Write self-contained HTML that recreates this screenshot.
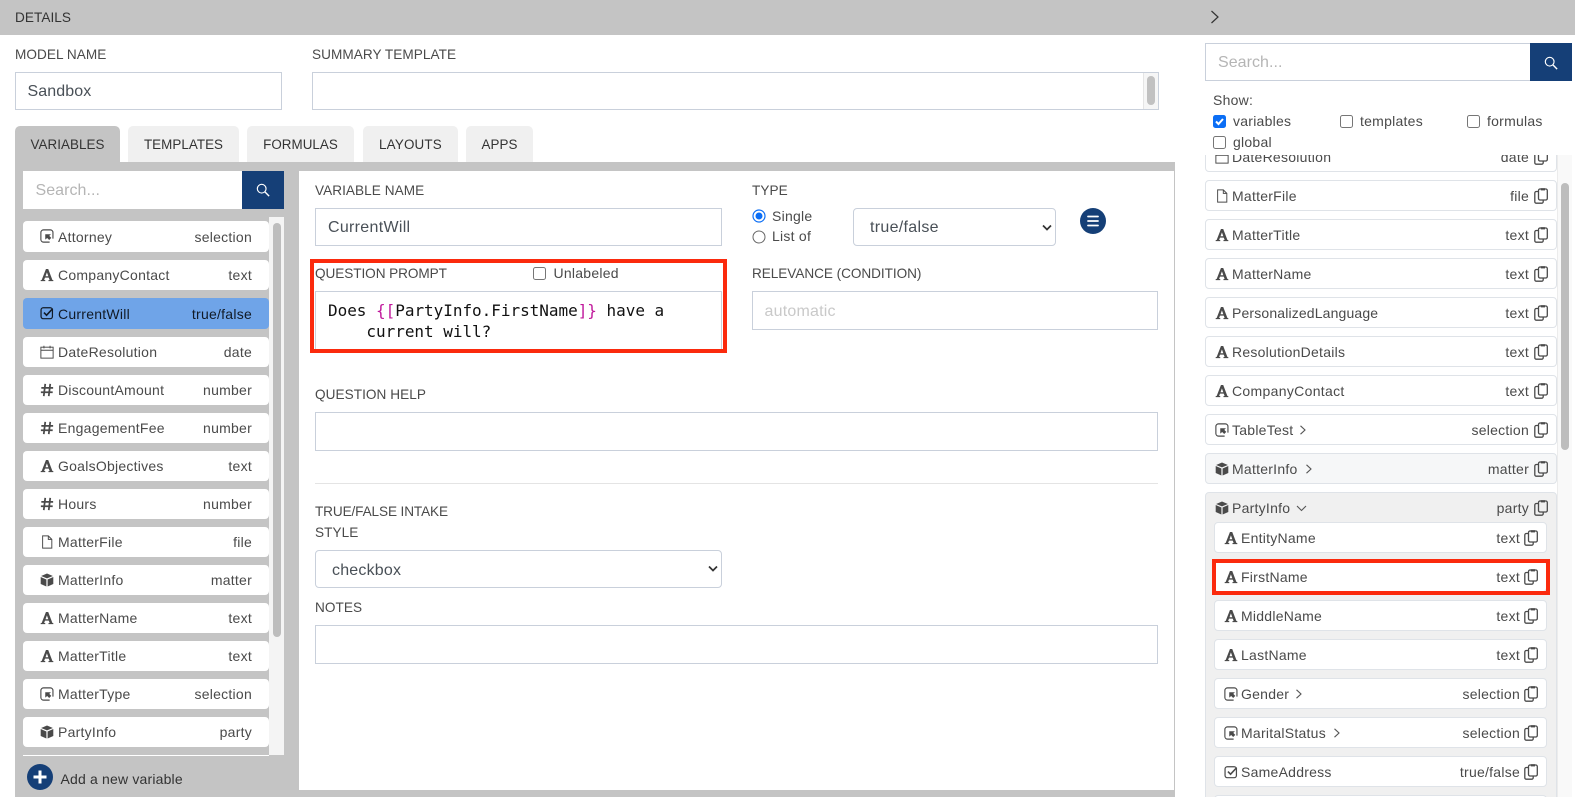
<!DOCTYPE html>
<html><head><meta charset="utf-8"><style>
html,body{margin:0;padding:0;width:1575px;height:797px;overflow:hidden;background:#fff}
body{position:relative;font-family:"Liberation Sans",sans-serif;font-size:14px;color:#4a4a4a}
div,span,svg{position:absolute;box-sizing:border-box}
.t{line-height:20px;white-space:nowrap;letter-spacing:.25px}
.l{line-height:20px;white-space:nowrap;font-size:13.6px;color:#4a4a4a;letter-spacing:.05px;margin-top:1px}
.b{background:#fff;border:1px solid #c9d0db}
.v{font-size:16px;line-height:20px;color:#495057;white-space:nowrap;letter-spacing:.1px;margin-top:1px}
.g{background:#c4c4c4}
.tab{top:126px;height:36px;border-radius:5px 5px 0 0;background:#f0f0f0;color:#333;font-size:13.4px;line-height:37px;text-align:center;letter-spacing:.05px}
.r{left:23px;width:246px;height:30px;background:#fff;border-radius:4px}
.r .i,.q .i,.c .i{width:14px;height:14px;top:8px;fill:#4a4a4a;color:#4a4a4a}
.r .i{left:17px}
.r .n{left:35px;top:5px}
.r .k{right:17px;top:5px}
.n,.k{line-height:20px;white-space:nowrap;letter-spacing:.25px}
.q{left:1205px;width:352px;height:31px;background:#fff;border:1px solid #dfe3e8;border-radius:4px}
.c{left:1214px;width:333px;height:31px;background:#fff;border:1px solid #dfe3e8;border-radius:4px}
.q .i,.c .i{left:9px}
.q .n,.c .n{left:26px;top:5px}
.q .k{right:27px;top:5px}
.c .k{right:26px;top:5px}
.q .i.p,.c .i.p{left:auto;right:8.5px;top:7px;width:14px;height:16px}
.a{top:10px;width:8px;height:10px;fill:none;stroke:#555;stroke-width:1.1}
.cb{width:13px;height:13px;border:1px solid #767676;border-radius:2.5px;background:#fff}
</style></head><body>
<svg width="0" height="0" style="left:0;top:0"><defs>
<symbol id="A" viewBox="0 0 16 16"><path fill-rule="evenodd" d="M.8 15v-1.3h1.1L6.8 1.2h2.6l4.8 12.5h1v1.3H9.7v-1.3h1.3L10 11H5.7l-1 2.7H6V15zM6.3 9.4h3.2L7.9 5z"/></symbol>
<symbol id="S" viewBox="0 0 16 16"><path d="M14.8 11V4a3 3 0 0 0-3-3H4a3 3 0 0 0-3 3v8a3 3 0 0 0 3 3h7" fill="none" stroke="currentColor" stroke-width="1.300"/><path d="M6 6h6.500l-1.900 1.900 2.300 2.300-2.400 2.400-2.300-2.300L6 12.200z"/></symbol>
<symbol id="B" viewBox="0 0 16 16"><path d="M8 .6l6.700 2.800L8 6.200 1.300 3.400zM.8 4.600l6.500 2.800V15.400L.8 12.600zM15.200 4.600L8.700 7.400V15.400l6.500-2.800z"/></symbol>
<symbol id="C" viewBox="0 0 16 16"><rect x="1.200" y="2" width="13" height="12.500" rx="2.500" fill="none" stroke="currentColor" stroke-width="1.400"/><path d="M4.500 7.500l3 3L14.500 3" fill="none" stroke="currentColor" stroke-width="1.800"/></symbol>
<symbol id="D" viewBox="0 0 16 16"><rect x="1" y="2.500" width="14" height="12.500" fill="none" stroke="currentColor" stroke-width="1.100"/><path d="M1 6h14M4.500 .8v3M11.500 .8v3" fill="none" stroke="currentColor" stroke-width="1.100"/></symbol>
<symbol id="H" viewBox="0 0 16 16"><path d="M6 1L4.300 15M11.700 1L10 15M1.500 5.500h13.500M1 10.500h13.500" fill="none" stroke="currentColor" stroke-width="2"/></symbol>
<symbol id="F" viewBox="0 0 16 16"><path d="M3 1h6.500L13.500 5v10H3zM9.500 1v4h4" fill="none" stroke="currentColor" stroke-width="1.100"/></symbol>
<symbol id="P" viewBox="0 0 14 16"><rect x="4.500" y="1" width="8.800" height="11" rx="1.500" fill="none" stroke="currentColor" stroke-width="1.300"/><path d="M4.500 3.500H2.300A1.500 1.500 0 0 0 .8 5v8.700a1.500 1.500 0 0 0 1.500 1.500h5.400a1.500 1.500 0 0 0 1.500-1.500V12" fill="none" stroke="currentColor" stroke-width="1.300"/><rect x="6.800" y=".2" width="4.200" height="2.200" fill="currentColor"/></symbol>
<symbol id="R" viewBox="0 0 8 10"><path d="M1.500 .8L6 5 1.500 9.200"/></symbol>
<symbol id="G" viewBox="0 0 16 16"><circle cx="6.500" cy="6.500" r="5" fill="none" stroke="#fff" stroke-width="1.300"/><path d="M10.200 10.200l4.800 4.800" stroke="#fff" stroke-width="1.600" fill="none"/></symbol>
</defs></svg>

<div class="g" style="left:0;top:0;width:1575px;height:35px"></div>
<div class="t" style="left:15px;top:8px;color:#333;font-size:13.6px;letter-spacing:.05px">DETAILS</div>
<svg style="left:1210px;top:10px" width="10" height="14" viewBox="0 0 10 14"><path d="M1.500 1l6.500 6-6.500 6" fill="none" stroke="#333" stroke-width="1.200"/></svg>

<div class="l" style="left:15px;top:44px">MODEL NAME</div>
<div class="b" style="left:15px;top:72px;width:267px;height:38px"></div>
<div class="v" style="left:27.500px;top:81px">Sandbox</div>
<div class="l" style="left:312px;top:44px">SUMMARY TEMPLATE</div>
<div class="b" style="left:312px;top:72px;width:847px;height:38px"></div>
<div style="left:1143px;top:73px;width:15px;height:36px;background:#f6f6f6;border-left:1px solid #e5e5e5"></div>
<div style="left:1147px;top:76px;width:8px;height:29px;background:#c1c1c1;border-radius:4px"></div>

<div class="tab g" style="left:15px;width:105px;background:#c4c4c4">VARIABLES</div>
<div class="tab" style="left:128px;width:111px">TEMPLATES</div>
<div class="tab" style="left:247px;width:107px">FORMULAS</div>
<div class="tab" style="left:363px;width:95px;letter-spacing:.2px">LAYOUTS</div>
<div class="tab" style="left:466px;width:67px">APPS</div>

<div class="g" style="left:15px;top:162px;width:1160px;height:635px"></div>
<div style="left:299px;top:171px;width:876px;height:619px;background:#fff;border-right:1px solid #c4c4c4"></div>

<div style="left:23px;top:171px;width:219px;height:38px;background:#fff"></div>
<div class="t" style="left:35.500px;top:181px;font-size:16px;color:#b5b5b5;letter-spacing:.05px">Search...</div>
<div style="left:242px;top:171px;width:42px;height:38px;background:#153f77"></div>
<svg style="left:256px;top:183px" width="14" height="14"><use href="#G"/></svg>

<div style="left:269px;top:217px;width:15px;height:538px;background:#f4f4f4"></div>
<div style="left:273px;top:223px;width:8px;height:414px;background:#bdbdbd;border-radius:4px"></div>

<div class="r" style="top:221px;height:31px"><svg class="i"><use href="#S"/></svg><span class="n" style="top:6px">Attorney</span><span class="k" style="top:6px">selection</span></div>
<div class="r" style="top:260px"><svg class="i"><use href="#A"/></svg><span class="n">CompanyContact</span><span class="k">text</span></div>
<div class="r" style="top:298px;height:31px;background:#6fa4e8;color:#111a26"><svg class="i" style="fill:#111a26;color:#111a26"><use href="#C"/></svg><span class="n" style="top:6px">CurrentWill</span><span class="k" style="top:6px">true/false</span></div>
<div class="r" style="top:337px"><svg class="i"><use href="#D"/></svg><span class="n">DateResolution</span><span class="k">date</span></div>
<div class="r" style="top:375px"><svg class="i"><use href="#H"/></svg><span class="n">DiscountAmount</span><span class="k">number</span></div>
<div class="r" style="top:413px"><svg class="i"><use href="#H"/></svg><span class="n">EngagementFee</span><span class="k">number</span></div>
<div class="r" style="top:451px"><svg class="i"><use href="#A"/></svg><span class="n">GoalsObjectives</span><span class="k">text</span></div>
<div class="r" style="top:489px"><svg class="i"><use href="#H"/></svg><span class="n">Hours</span><span class="k">number</span></div>
<div class="r" style="top:527px"><svg class="i"><use href="#F"/></svg><span class="n">MatterFile</span><span class="k">file</span></div>
<div class="r" style="top:565px"><svg class="i"><use href="#B"/></svg><span class="n">MatterInfo</span><span class="k">matter</span></div>
<div class="r" style="top:603px"><svg class="i"><use href="#A"/></svg><span class="n">MatterName</span><span class="k">text</span></div>
<div class="r" style="top:641px"><svg class="i"><use href="#A"/></svg><span class="n">MatterTitle</span><span class="k">text</span></div>
<div class="r" style="top:679px"><svg class="i"><use href="#S"/></svg><span class="n">MatterType</span><span class="k">selection</span></div>
<div class="r" style="top:717px"><svg class="i"><use href="#B"/></svg><span class="n">PartyInfo</span><span class="k">party</span></div>
<div style="left:23px;top:755px;width:246px;height:1px;background:#fff"></div>

<svg style="left:27px;top:764px" width="26" height="26" viewBox="0 0 26 26"><circle cx="13" cy="13" r="13" fill="#153f77"/><path d="M13 6.500v13M6.500 13h13" stroke="#fff" stroke-width="3"/></svg>
<div class="t" style="left:60.500px;top:769px;color:#333;letter-spacing:.18px">Add a new variable</div>

<div class="l" style="left:315px;top:180px">VARIABLE NAME</div>
<div class="b" style="left:315px;top:208px;width:407px;height:38px"></div>
<div class="v" style="left:328px;top:217px;letter-spacing:.3px">CurrentWill</div>

<div class="l" style="left:752px;top:180px">TYPE</div>
<svg style="left:752px;top:209px" width="14" height="14"><circle cx="7" cy="7" r="6" fill="#fff" stroke="#0b6ef5" stroke-width="1.200"/><circle cx="7" cy="7" r="3.500" fill="#0b6ef5"/></svg>
<div class="t" style="left:772px;top:206px">Single</div>
<svg style="left:752px;top:230px" width="14" height="14"><circle cx="7" cy="7" r="6" fill="#fff" stroke="#666" stroke-width="1"/></svg>
<div class="t" style="left:772px;top:226px">List of</div>
<div class="b" style="left:853px;top:208px;width:203px;height:38px;border-radius:4px"></div>
<div class="v" style="left:870px;top:217px;letter-spacing:.3px">true/false</div>
<svg style="left:1042px;top:224px" width="10" height="8"><path d="M1 1.500l4 4 4-4" fill="none" stroke="#333" stroke-width="1.700"/></svg>
<svg style="left:1080px;top:208px" width="26" height="26"><circle cx="13" cy="13" r="13" fill="#153f77"/><path d="M8 8.500h10M8 13h10M8 17.500h10" stroke="#fff" stroke-width="1.800" stroke-linecap="round"/></svg>

<div class="l" style="left:315px;top:263px;letter-spacing:-.07px">QUESTION PROMPT</div>
<div class="cb" style="left:533px;top:267px"></div>
<div class="t" style="left:553.500px;top:263px">Unlabeled</div>
<div class="b" style="left:315px;top:291px;width:407px;height:60px"></div>
<div style="left:328px;top:300px;font-family:'DejaVu Sans Mono',monospace;font-size:16px;line-height:21px;letter-spacing:-.03px;color:#111;white-space:pre">Does <span style="position:static;color:#c0189b">{[</span>PartyInfo.FirstName<span style="position:static;color:#c0189b">]}</span> have a
    current will?</div>
<div style="left:310px;top:259px;width:417px;height:94px;border:4px solid #fb2a0d"></div>

<div class="l" style="left:752px;top:263px;letter-spacing:-.05px">RELEVANCE (CONDITION)</div>
<div class="b" style="left:752px;top:291px;width:406px;height:39px"></div>
<div class="v" style="left:764.500px;top:301px;color:#c9c9c9;letter-spacing:.2px">automatic</div>

<div class="l" style="left:315px;top:384px">QUESTION HELP</div>
<div class="b" style="left:315px;top:412px;width:843px;height:39px"></div>
<div style="left:315px;top:483px;width:843px;height:1px;background:#e4e4e4"></div>
<div class="l" style="left:315px;top:501px;letter-spacing:-.12px">TRUE/FALSE INTAKE</div>
<div class="l" style="left:315px;top:522px">STYLE</div>
<div class="b" style="left:315px;top:550px;width:407px;height:38px;border-radius:4px"></div>
<div class="v" style="left:332px;top:560px;letter-spacing:.2px">checkbox</div>
<svg style="left:708px;top:565px" width="10" height="8"><path d="M1 1.500l4 4 4-4" fill="none" stroke="#333" stroke-width="1.700"/></svg>
<div class="l" style="left:315px;top:597px">NOTES</div>
<div class="b" style="left:315px;top:625px;width:843px;height:39px"></div>

<div style="left:1557px;top:155px;width:15px;height:642px;background:#f9f9f9;border-left:1px solid #ececec"></div>
<div style="left:1561px;top:183px;width:8px;height:267px;background:#bdbdbd;border-radius:4px"></div>

<div class="q" style="top:141px"><svg class="i"><use href="#D"/></svg><span class="n">DateResolution</span><span class="k">date</span><svg class="i p"><use href="#P"/></svg></div>
<div class="q" style="top:180px"><svg class="i"><use href="#F"/></svg><span class="n">MatterFile</span><span class="k">file</span><svg class="i p"><use href="#P"/></svg></div>
<div class="q" style="top:219px"><svg class="i"><use href="#A"/></svg><span class="n">MatterTitle</span><span class="k">text</span><svg class="i p"><use href="#P"/></svg></div>
<div class="q" style="top:258px"><svg class="i"><use href="#A"/></svg><span class="n">MatterName</span><span class="k">text</span><svg class="i p"><use href="#P"/></svg></div>
<div class="q" style="top:297px"><svg class="i"><use href="#A"/></svg><span class="n" style="letter-spacing:.15px">PersonalizedLanguage</span><span class="k">text</span><svg class="i p"><use href="#P"/></svg></div>
<div class="q" style="top:336px"><svg class="i"><use href="#A"/></svg><span class="n">ResolutionDetails</span><span class="k">text</span><svg class="i p"><use href="#P"/></svg></div>
<div class="q" style="top:375px"><svg class="i"><use href="#A"/></svg><span class="n" style="letter-spacing:.32px">CompanyContact</span><span class="k">text</span><svg class="i p"><use href="#P"/></svg></div>
<div class="q" style="top:414px"><svg class="i"><use href="#S"/></svg><span class="n">TableTest</span><svg class="a" style="left:93px"><use href="#R"/></svg><span class="k">selection</span><svg class="i p"><use href="#P"/></svg></div>
<div class="q" style="top:453px;background:#f6f7f8"><svg class="i"><use href="#B"/></svg><span class="n">MatterInfo</span><svg class="a" style="left:99px"><use href="#R"/></svg><span class="k">matter</span><svg class="i p"><use href="#P"/></svg></div>
<div class="q" style="top:492px;height:320px;background:#f0f0f0"><svg class="i"><use href="#B"/></svg><span class="n">PartyInfo</span><svg style="left:90px;top:12px" width="11" height="7"><path d="M1 1l4.500 4.500L10 1" fill="none" stroke="#555" stroke-width="1.100"/></svg><span class="k">party</span><svg class="i p"><use href="#P"/></svg></div>

<div class="c" style="top:522px"><svg class="i"><use href="#A"/></svg><span class="n">EntityName</span><span class="k">text</span><svg class="i p"><use href="#P"/></svg></div>
<div class="c" style="top:561px"><svg class="i"><use href="#A"/></svg><span class="n">FirstName</span><span class="k">text</span><svg class="i p"><use href="#P"/></svg></div>
<div class="c" style="top:600px"><svg class="i"><use href="#A"/></svg><span class="n">MiddleName</span><span class="k">text</span><svg class="i p"><use href="#P"/></svg></div>
<div class="c" style="top:639px"><svg class="i"><use href="#A"/></svg><span class="n">LastName</span><span class="k">text</span><svg class="i p"><use href="#P"/></svg></div>
<div class="c" style="top:678px"><svg class="i"><use href="#S"/></svg><span class="n">Gender</span><svg class="a" style="left:80px"><use href="#R"/></svg><span class="k">selection</span><svg class="i p"><use href="#P"/></svg></div>
<div class="c" style="top:717px"><svg class="i"><use href="#S"/></svg><span class="n">MaritalStatus</span><svg class="a" style="left:118px"><use href="#R"/></svg><span class="k">selection</span><svg class="i p"><use href="#P"/></svg></div>
<div class="c" style="top:756px"><svg class="i"><use href="#C"/></svg><span class="n">SameAddress</span><span class="k">true/false</span><svg class="i p"><use href="#P"/></svg></div>
<div class="c" style="top:795px"></div>
<div style="left:1212px;top:559px;width:338px;height:36px;border:4px solid #fb2a0d"></div>

<div style="left:1190px;top:35px;width:385px;height:120px;background:#fff"></div>
<div class="b" style="left:1205px;top:43px;width:326px;height:38px"></div>
<div class="t" style="left:1218px;top:52.500px;font-size:16px;color:#b5b5b5;letter-spacing:.05px">Search...</div>
<div style="left:1530px;top:43px;width:42px;height:38px;background:#153f77"></div>
<svg style="left:1544px;top:56px" width="14" height="14"><use href="#G"/></svg>
<div class="t" style="left:1213px;top:90px">Show:</div>
<div style="left:1213px;top:115px;width:13px;height:13px;background:#0b6ef5;border-radius:2.5px"></div>
<svg style="left:1213px;top:115px" width="13" height="13"><path d="M3 6.500l2.500 2.500L10 4" fill="none" stroke="#fff" stroke-width="2"/></svg>
<div class="t" style="left:1233px;top:111px">variables</div>
<div class="cb" style="left:1340px;top:115px"></div>
<div class="t" style="left:1360px;top:111px">templates</div>
<div class="cb" style="left:1467px;top:115px"></div>
<div class="t" style="left:1487px;top:111px">formulas</div>
<div class="cb" style="left:1213px;top:136px"></div>
<div class="t" style="left:1233px;top:132px">global</div>
</body></html>
